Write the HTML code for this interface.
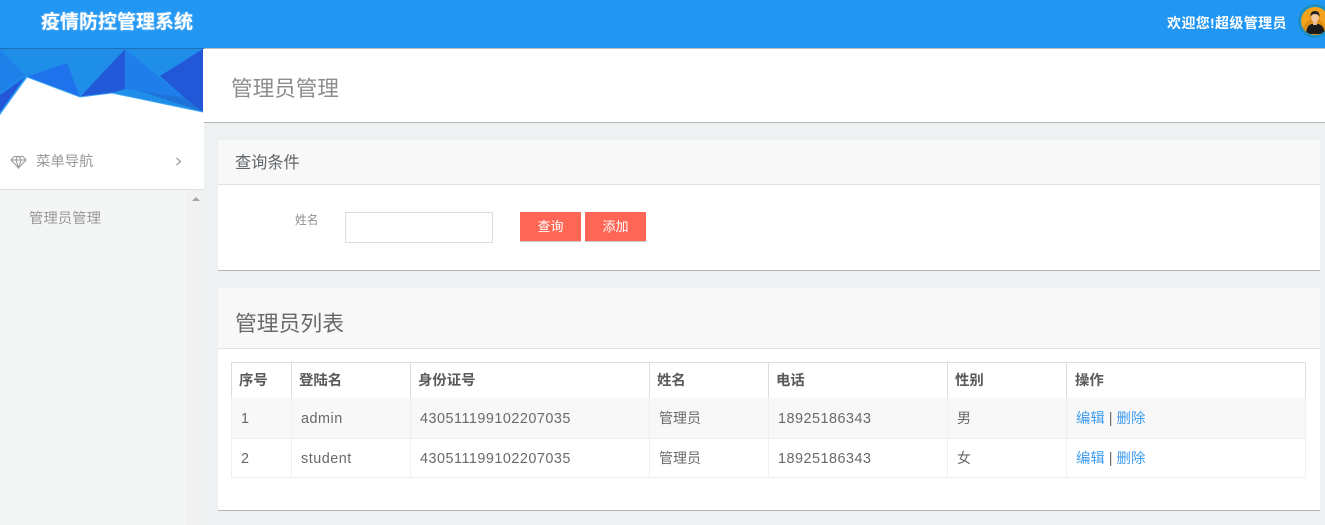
<!DOCTYPE html>
<html lang="zh">
<head>
<meta charset="utf-8">
<title>疫情防控管理系统</title>
<style>
*{box-sizing:border-box;margin:0;padding:0}
html,body{width:1325px;height:525px;overflow:hidden;background:#eef1f2;font-family:"Liberation Sans","Noto Sans CJK SC",sans-serif;color:#676a6c}
.a{position:absolute}
.t{position:absolute;white-space:nowrap}
.th{font-size:14.4px;font-weight:bold;color:#5a5a5a;line-height:18px;top:372px}
.td{font-size:14.4px;color:#676a6c;line-height:20px;letter-spacing:.5px}
.cn{font-size:14px;letter-spacing:0}
.ops{font-size:14.4px;letter-spacing:0}
.lnk{color:#3f9cf0}
.v{position:absolute;width:1px}
.btn{position:absolute;top:212px;width:61px;height:30px;background:#ff6655;border-bottom:1px solid #c9c9c9;color:#fff;font-size:13px;text-align:center;line-height:30px}
</style>
</head>
<body>
<div class="a" style="left:0;top:0;width:1325px;height:48px;background:#2196f3"></div>
<div class="a" style="left:0;top:48px;width:204px;height:1px;background:#1f6fb8"></div>
<div class="a" style="left:204px;top:48px;width:1121px;height:1px;background:#bdbdbd"></div>
<div class="t" style="left:41px;top:11px;font-size:19px;font-weight:bold;line-height:24px;color:#fff;text-shadow:0 0 2px rgba(255,255,255,.5)">疫情防控管理系统</div>
<div class="t" style="left:1167px;top:14px;font-size:14px;font-weight:bold;line-height:18px;letter-spacing:.35px;color:#fff">欢迎您!超级管理员</div>
<svg class="a" style="left:1297px;top:3px" width="28" height="36" viewBox="0 0 28 36">
<defs><clipPath id="c"><circle cx="18" cy="18" r="14"/></clipPath></defs>
<circle cx="18" cy="18" r="15.5" fill="#f5a31c" stroke="#1c8fc4" stroke-width="3"/>
<g clip-path="url(#c)">
<path d="M4 26 L18 10 L34 30 L18 36 Z" fill="#de8f15"/>
<path d="M9 31 Q9.500 22 15 21 L21 21 Q27 22 28 31 Z" fill="#1b1b1b"/>
</g>
<rect x="16" y="18" width="4" height="4" fill="#e8bb98"/>
<ellipse cx="18" cy="14.500" rx="3.800" ry="5" fill="#f1c8a6"/>
<path d="M13.500 14 Q13 8 18 8 Q23 8 22.500 14 Q21.500 11 18 11 Q14.500 11 13.500 14Z" fill="#222"/>
</svg>

<div class="a" style="left:0;top:49px;width:204px;height:476px;background:#fff"></div>
<svg class="a" style="left:0;top:49px" width="204" height="66" viewBox="0 49 204 66">
<polygon points="0,49 203,49 203,113 112,93 80,97 27,77 0,115" fill="#1f8ee9"/>
<polygon points="0,50 25,75 0,93" fill="#1f80ea"/>
<polygon points="0,95 25,77 0,112" fill="#2157d8"/>
<polygon points="27,77 67,63 80,97" fill="#1e72ec"/>
<polygon points="80,97 125,49 125,89 112,93" fill="#2259d8"/>
<polygon points="125,49 185,98 125,89" fill="#1f7eea"/>
<polygon points="160,76 203,49 203,112 185,98" fill="#2258d8"/>
<polygon points="140,91 185,98 203,112" fill="#1f72d8"/>
<polygon points="0,118 27,77 80,97 112,93 203,112 203,118" fill="#fff"/>
<path d="M0 114 L27 77 L80 97 L112 93 L203 112" fill="none" stroke="#3ea5f5" stroke-width="1"/>
</svg>
<svg class="a" style="left:10px;top:155px" width="17" height="14" viewBox="0 0 17 14" fill="none" stroke="#9a9a9a" stroke-width="1.100">
<path d="M4 1.500H13L16 5L8.500 13L1 5Z"/><path d="M1 5H16M6 5L8.500 13L11 5L9.500 1.500M6 5L7.500 1.500"/>
</svg>
<div class="t" style="left:36px;top:153px;font-size:14.4px;line-height:18px;color:#9a9a9a">菜单导航</div>
<svg class="a" style="left:175px;top:157px" width="8" height="9" viewBox="0 0 8 9" fill="none" stroke="#9a9a9a" stroke-width="1.200"><path d="M1.500 1L5.500 4.500L1.500 8"/></svg>
<div class="a" style="left:0;top:189px;width:204px;height:1px;background:#dfdfdf"></div>
<div class="a" style="left:0;top:190px;width:187px;height:335px;background:#f4f6f6"></div>
<div class="a" style="left:187px;top:190px;width:17px;height:335px;background:#f1f1f1"></div>
<div class="a" style="left:192px;top:197px;width:0;height:0;border-left:4px solid transparent;border-right:4px solid transparent;border-bottom:4px solid #a6a6a6"></div>
<div class="t" style="left:29px;top:210px;font-size:14.4px;line-height:18px;color:#999">管理员管理</div>
<div class="a" style="left:204px;top:49px;width:1121px;height:476px;background:#eef1f2"></div>
<div class="a" style="left:204px;top:49px;width:1121px;height:74px;background:#fff;border-bottom:1px solid #b4b8b8"></div>
<div class="t" style="left:231px;top:74px;font-size:21.6px;line-height:30px;color:#8c8c8c">管理员管理</div>

<div class="a" style="left:218px;top:140px;width:1102px;height:131px;background:#fff;border-bottom:1px solid #b0b5b5"></div>
<div class="a" style="left:218px;top:140px;width:1102px;height:45px;background:#f8f8f8;border-bottom:1px solid #e3e3e3"></div>
<div class="t" style="left:235px;top:152px;font-size:16.2px;line-height:22px;color:#5f6468">查询条件</div>
<div class="t" style="left:295px;top:213px;font-size:11.700px;line-height:16px;color:#8f8f8f">姓名</div>
<div class="a" style="left:345px;top:212px;width:148px;height:31px;background:#fff;border:1px solid #dddddd"></div>
<div class="btn" style="left:520px">查询</div>
<div class="btn" style="left:585px">添加</div>

<div class="a" style="left:218px;top:288px;width:1102px;height:223px;background:#fff;border-bottom:1px solid #b0b5b5"></div>
<div class="a" style="left:218px;top:288px;width:1102px;height:61px;background:#f8f8f8;border-bottom:1px solid #e3e3e3"></div>
<div class="t" style="left:235px;top:309px;font-size:21.8px;line-height:30px;color:#676a6c">管理员列表</div>

<div class="a" style="left:231px;top:362px;width:1075px;height:116px;background:#fff"></div>
<div class="a" style="left:231px;top:398px;width:1075px;height:40px;background:#f8f8f8"></div>
<div class="a" style="left:231px;top:362px;width:1075px;height:1px;background:#dedede"></div>
<div class="a" style="left:231px;top:438px;width:1075px;height:1px;background:#efefef"></div>
<div class="a" style="left:231px;top:477px;width:1075px;height:1px;background:#efefef"></div>

<div class="v" style="left:231px;top:362px;height:36px;background:#dedede"></div>
<div class="v" style="left:291px;top:362px;height:36px;background:#dedede"></div>
<div class="v" style="left:410px;top:362px;height:36px;background:#dedede"></div>
<div class="v" style="left:649px;top:362px;height:36px;background:#dedede"></div>
<div class="v" style="left:768px;top:362px;height:36px;background:#dedede"></div>
<div class="v" style="left:947px;top:362px;height:36px;background:#dedede"></div>
<div class="v" style="left:1066px;top:362px;height:36px;background:#dedede"></div>
<div class="v" style="left:1305px;top:362px;height:36px;background:#dedede"></div>

<div class="v" style="left:231px;top:398px;height:80px;background:#efefef"></div>
<div class="v" style="left:291px;top:398px;height:80px;background:#efefef"></div>
<div class="v" style="left:410px;top:398px;height:80px;background:#efefef"></div>
<div class="v" style="left:649px;top:398px;height:80px;background:#efefef"></div>
<div class="v" style="left:768px;top:398px;height:80px;background:#efefef"></div>
<div class="v" style="left:947px;top:398px;height:80px;background:#efefef"></div>
<div class="v" style="left:1066px;top:398px;height:80px;background:#efefef"></div>
<div class="v" style="left:1305px;top:398px;height:80px;background:#efefef"></div>

<div class="t th" style="left:239px">序号</div>
<div class="t th" style="left:299px">登陆名</div>
<div class="t th" style="left:418px">身份证号</div>
<div class="t th" style="left:657px">姓名</div>
<div class="t th" style="left:776px">电话</div>
<div class="t th" style="left:955px">性别</div>
<div class="t th" style="left:1075px">操作</div>

<div class="t td" style="left:241px;top:409px">1</div>
<div class="t td" style="left:301px;top:409px">admin</div>
<div class="t td" style="left:420px;top:409px">430511199102207035</div>
<div class="t td cn" style="left:659px;top:408px">管理员</div>
<div class="t td" style="left:778px;top:409px">18925186343</div>
<div class="t td cn" style="left:957px;top:408px">男</div>
<div class="t td ops" style="left:1076px;top:409px"><span class="lnk">编辑</span> | <span class="lnk">删除</span></div>

<div class="t td" style="left:241px;top:449px">2</div>
<div class="t td" style="left:301px;top:449px">student</div>
<div class="t td" style="left:420px;top:449px">430511199102207035</div>
<div class="t td cn" style="left:659px;top:448px">管理员</div>
<div class="t td" style="left:778px;top:449px">18925186343</div>
<div class="t td cn" style="left:957px;top:448px">女</div>
<div class="t td ops" style="left:1076px;top:449px"><span class="lnk">编辑</span> | <span class="lnk">删除</span></div>
</body>
</html>
